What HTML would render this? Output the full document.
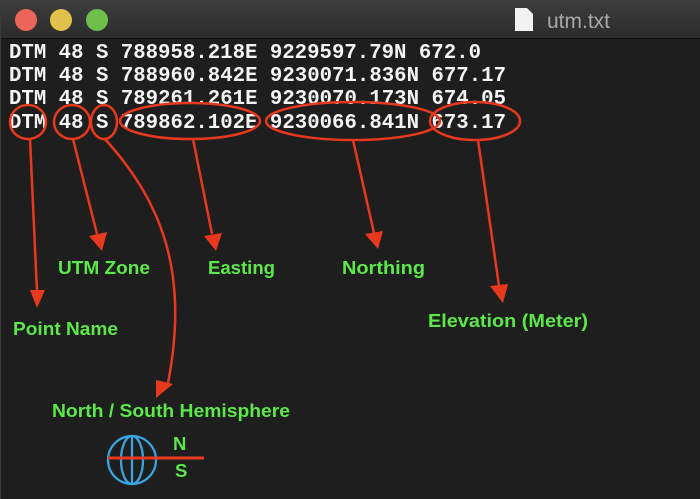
<!DOCTYPE html>
<html><head><meta charset="utf-8"><style>
html,body{margin:0;padding:0;background:#1e1e1e;width:700px;height:499px;overflow:hidden}
</style></head><body>
<svg width="700" height="499" viewBox="0 0 700 499" xmlns="http://www.w3.org/2000/svg">
<defs>
<linearGradient id="tb" x1="0" y1="0" x2="0" y2="1"><stop offset="0" stop-color="#3d3d3d"/><stop offset="1" stop-color="#2c2c2c"/></linearGradient>
</defs>
<rect x="0" y="0" width="700" height="499" fill="#1e1e1e"/>
<rect x="0" y="0" width="700" height="38" fill="url(#tb)"/>
<rect x="0" y="38" width="700" height="1" fill="#111"/>
<rect x="0" y="0" width="1" height="499" fill="#3a3a3a"/>
<circle cx="26" cy="20" r="11" fill="#ec6559"/>
<circle cx="61" cy="20" r="11" fill="#e0c24a"/>
<circle cx="97" cy="20" r="11" fill="#6cc04a"/>
<path d="M515 8 h12 l6 6 v17 h-18z" fill="#f2f2f2"/>
<text x="547" y="28" font-family="Liberation Sans, sans-serif" font-size="21" fill="#a8a8a8">utm.txt</text>
<g font-family="Liberation Mono, monospace" font-weight="bold" font-size="21" fill="#f4f4f4">
<text x="9" y="58" textLength="472" lengthAdjust="spacingAndGlyphs">DTM 48 S 788958.218E 9229597.79N 672.0</text>
<text x="9" y="81" textLength="497" lengthAdjust="spacingAndGlyphs">DTM 48 S 788960.842E 9230071.836N 677.17</text>
<text x="9" y="104" textLength="497" lengthAdjust="spacingAndGlyphs">DTM 48 S 789261.261E 9230070.173N 674.05</text>
<text x="9" y="128" textLength="497" lengthAdjust="spacingAndGlyphs">DTM 48 S 789862.102E 9230066.841N 673.17</text>
</g>
<g fill="none" stroke="#e8391f" stroke-width="2.5">
<ellipse cx="28" cy="122" rx="18" ry="17"/>
<ellipse cx="72" cy="122" rx="18" ry="17"/>
<ellipse cx="104" cy="122" rx="13" ry="17"/>
<ellipse cx="190" cy="121" rx="70" ry="18"/>
<ellipse cx="353" cy="121" rx="87" ry="19"/>
<ellipse cx="475" cy="121" rx="45" ry="19"/>
<path d="M30 139 L37 292"/>
<path d="M73 139 L97 234"/>
<path d="M193 139 L212 234"/>
<path d="M353 140 L374 233"/>
<path d="M478 140 L499 286"/>
<path d="M105 139 C160 200 190 270 168 383"/>
</g>
<g fill="#e8391f">
<path d="M30 290 L45 290 L37 308z"/>
<path d="M89 236 L107 232 L102 251z"/>
<path d="M204 236 L222 233 L216 251z"/>
<path d="M365 234 L383 231 L378 249z"/>
<path d="M490 286 L508 284 L503 303z"/>
<path d="M156 380 L173 384 L156 398z"/>
</g>
<g font-family="Liberation Sans, sans-serif" font-weight="bold" font-size="18.5" fill="#5de84a">
<text x="58" y="274" textLength="92" lengthAdjust="spacingAndGlyphs">UTM Zone</text>
<text x="208" y="274" textLength="67" lengthAdjust="spacingAndGlyphs">Easting</text>
<text x="342" y="274" textLength="83" lengthAdjust="spacingAndGlyphs">Northing</text>
<text x="13" y="335" textLength="105" lengthAdjust="spacingAndGlyphs">Point Name</text>
<text x="428" y="327" textLength="160" lengthAdjust="spacingAndGlyphs">Elevation (Meter)</text>
<text x="52" y="417" textLength="238" lengthAdjust="spacingAndGlyphs">North / South Hemisphere</text>
<text x="173" y="450">N</text>
<text x="175" y="477">S</text>
</g>
<g fill="none" stroke="#3aa3e0" stroke-width="2.3">
<circle cx="132" cy="460" r="24"/>
<ellipse cx="132" cy="460" rx="11" ry="24"/>
<line x1="132" y1="436" x2="132" y2="484"/>
</g>
<line x1="108" y1="458" x2="204" y2="458" stroke="#e8391f" stroke-width="3"/>
</svg>
</body></html>
